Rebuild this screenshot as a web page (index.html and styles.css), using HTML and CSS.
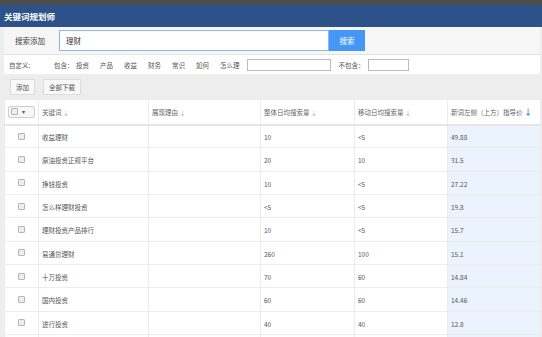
FILE: index.html
```html
<html>
	<head>
		<title>关键词规划师</title>
		<link rel="stylesheet" href="styles.css">
	</head>
	<body>
		<div class="topbar"></div>
		<div class="titlebar">关键词规划师</div>
		<div class="main">
			<div class="search_row">
				<span class="search_label">搜索添加</span>
				<div class="search_box">理财</div>
				<div class="search_btn">搜索</div>
			</div>
			<div class="filter_row">
				<span class="filter_title">自定义:</span>
				<span class="filter_inc">包含：</span>
				<span class="word">投资</span>
				<span class="word">产品</span>
				<span class="word">收益</span>
				<span class="word">财务</span>
				<span class="word">常识</span>
				<span class="word">如何</span>
				<span class="word">怎么理</span>
				<span class="filter_input wide"></span>
				<span class="filter_exc">不包含：</span>
				<span class="filter_input narrow"></span>
			</div>
			<div class="toolbar">
				<span class="tool_btn">添加</span>
				<span class="tool_btn">全部下载</span>
			</div>
			<table id="kw_table">
				<tr class="head">
					<td class="c_check"><span class="check_all"><span class="cb"></span><span class="caret">▾</span></span></td>
					<td class="c_kw">关键词 <span class="arrow">↓</span></td>
					<td class="c_reason">展现理由 <span class="arrow">↓</span></td>
					<td class="c_pc">整体日均搜索量 <span class="arrow">↓</span></td>
					<td class="c_mob">移动日均搜索量 <span class="arrow">↓</span></td>
					<td class="c_price">新词左侧（上方）指导价 <span class="arrow blue">↓</span></td>
				</tr>
				<tr><td class="c_check"><span class="cb"></span></td><td>收益理财</td><td></td><td>10</td><td>&lt;5</td><td class="hl">49.88</td></tr>
				<tr><td class="c_check"><span class="cb"></span></td><td>原油投资正规平台</td><td></td><td>20</td><td>10</td><td class="hl">31.5</td></tr>
				<tr><td class="c_check"><span class="cb"></span></td><td>挣钱投资</td><td></td><td>10</td><td>&lt;5</td><td class="hl">27.22</td></tr>
				<tr><td class="c_check"><span class="cb"></span></td><td>怎么样理财投资</td><td></td><td>&lt;5</td><td>&lt;5</td><td class="hl">19.8</td></tr>
				<tr><td class="c_check"><span class="cb"></span></td><td>理财投资产品排行</td><td></td><td>10</td><td>&lt;5</td><td class="hl">15.7</td></tr>
				<tr><td class="c_check"><span class="cb"></span></td><td>易通贷理财</td><td></td><td>260</td><td>100</td><td class="hl">15.1</td></tr>
				<tr><td class="c_check"><span class="cb"></span></td><td>十万投资</td><td></td><td>70</td><td>60</td><td class="hl">14.84</td></tr>
				<tr><td class="c_check"><span class="cb"></span></td><td>国内投资</td><td></td><td>60</td><td>60</td><td class="hl">14.46</td></tr>
				<tr><td class="c_check"><span class="cb"></span></td><td>进行投资</td><td></td><td>40</td><td>40</td><td class="hl">12.8</td></tr>
				<tr><td class="c_check"></td><td></td><td></td><td></td><td></td><td class="hl"></td></tr>
			</table>
		</div>
	</body>
</html>
```
FILE: styles.css
```css
body {margin:0px;font-family:"Noto Sans CJK SC","Liberation Sans",sans-serif;color:#444;overflow:hidden;background:#eeeeee}
.topbar {height:5px;background:#4d4d4d}
.titlebar {height:22px;line-height:22px;background:#2d5189;color:#fff;font-weight:bold;font-size:8.5px;padding-left:4px}
.main {padding:0px 2px 0px 4px;background:#eeeeee}
.search_row {height:27px;background:#f6f6f6;display:flex;align-items:center;border-bottom:1px solid #e2e2e2}
.search_label {font-size:7.5px;width:55px;padding-left:11px;box-sizing:border-box}
.search_box {width:270px;height:21px;box-sizing:border-box;border:1px solid #8cb8f2;background:#fff;font-size:7.5px;line-height:19px;padding-left:6px;color:#333}
.search_btn {width:36px;height:21px;background:#4597f5;color:#fff;font-size:7.5px;line-height:21px;text-align:center}
.filter_row {height:19px;background:#fff;display:flex;align-items:center;font-size:6.5px;color:#555;margin-bottom:1px}
.filter_title {padding-left:5px;width:45px}
.filter_inc {width:22px}
.word {margin-right:11px}
.filter_input {height:10px;border:1px solid #bbb;background:#fff;display:inline-block}
.filter_input.wide {width:82px;margin-left:-4px}
.filter_input.narrow {width:39px}
.filter_exc {margin-left:8px;width:29px}
.toolbar {height:24px;background:#ededed;display:flex;align-items:center;padding-left:6px}
.tool_btn {height:14px;line-height:14px;font-size:6.5px;border:1px solid #dcdcdc;background:#f8f8f8;padding:0px 5px;margin-right:8px;color:#555}
table#kw_table {width:536px;border-collapse:collapse;font-size:6.5px;background:#fff;table-layout:fixed}
table#kw_table td {border:1px solid #ececec;padding:2px 0px 0px 3px;height:23.33px;color:#555;white-space:nowrap;overflow:hidden;box-sizing:border-box}
table#kw_table tr.head td {height:25px;padding-top:0px;border-bottom:2px solid #e6e6e6;color:#666}
td.c_check {width:34px;text-align:center;padding:0px !important}
td.c_kw {width:110px}
td.c_reason {width:112px}
td.c_pc {width:94px}
td.c_mob {width:93px}
td.c_price {width:93px}
td.hl {background:#ebf3fd}
.arrow {color:#aaa;font-size:6px}
.arrow.blue {color:#3c8af0;font-weight:bold;font-size:8px}
.cb {display:inline-block;width:5px;height:5px;border:1px solid #b5b5b5;border-radius:1px;background:#eee;vertical-align:middle}
.check_all {display:inline-block;width:23px;height:10px;border:1px solid #ccc;border-radius:2px;background:#f7f7f7;line-height:10px;text-align:left;padding-left:2px;box-sizing:content-box}
.check_all .cb {width:5px;height:5px}
.caret {font-size:6px;color:#555;margin-left:4px;vertical-align:middle}
```
